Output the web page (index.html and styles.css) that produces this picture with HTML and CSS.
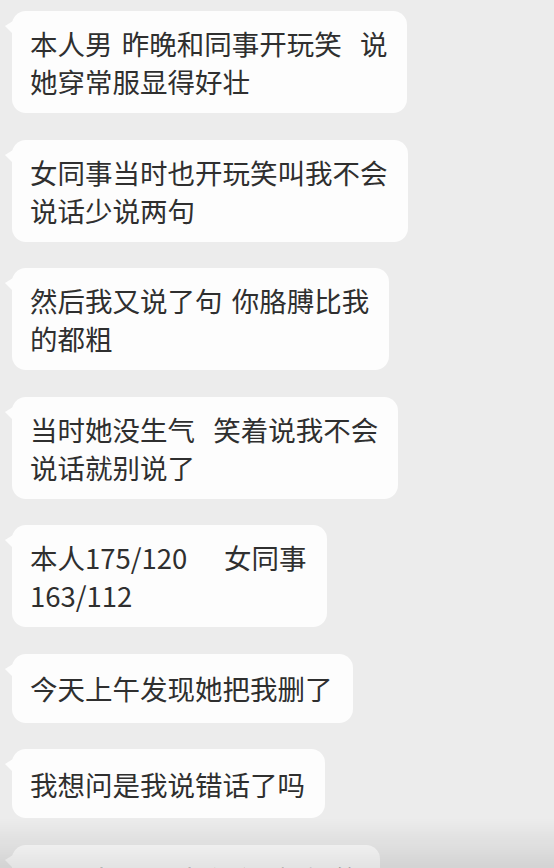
FILE: index.html
```html
<!DOCTYPE html>
<html lang="zh-CN">
<head>
    <meta charset="UTF-8">
    <meta name="viewport" content="width=device-width, initial-scale=1.0">
    <title>聊天记录</title>
    <link rel="stylesheet" href="styles.css">
</head>
<body>
    <div class="chat">
        <div class="bubble"><p>本人男 昨晚和同事开玩笑  说<br>她穿常服显得好壮</p></div>
        <div class="bubble"><p>女同事当时也开玩笑叫我不会<br>说话少说两句</p></div>
        <div class="bubble"><p>然后我又说了句 你胳膊比我<br>的都粗</p></div>
        <div class="bubble"><p>当时她没生气  笑着说我不会<br>说话就别说了</p></div>
        <div class="bubble"><p>本人175/120    女同事<br>163/112</p></div>
        <div class="bubble"><p>今天上午发现她把我删了</p></div>
        <div class="bubble"><p>我想问是我说错话了吗</p></div>
        <div class="bubble"><p>而且我俩平时关系还挺好的</p></div>
    </div>
    <div class="fade"></div>
</body>
</html>
```

FILE: styles.css
```css
html, body {
    height: 100%;
}
body {
    margin: 0;
    background-color: #ececec;
    font-family: "Noto Sans CJK SC", "Noto Sans", sans-serif;
    color: #2f2f2f;
    overflow: hidden;
}
.chat {
    display: flex;
    flex-direction: column;
    align-items: flex-start;
    gap: 26.5px;
    padding: 11px 0 0 12px;
}
.bubble {
    position: relative;
    display: flex;
    align-items: center;
    box-sizing: border-box;
    min-height: 69px;
    padding: 13px 20px 13px 18px;
    background: #fdfdfd;
    border-radius: 14px;
}
/* little tail on the left */
.bubble::before {
    content: "";
    position: absolute;
    left: -7px;
    top: 10px;
    border-right: 8px solid #fdfdfd;
    border-top: 5px solid transparent;
    border-bottom: 8px solid transparent;
}
.bubble p {
    margin: 0;
    font-size: 27.5px;
    line-height: 38px;
    word-spacing: 3px;
    white-space: pre;
}
.fade {
    position: fixed;
    left: 0;
    right: 0;
    bottom: 0;
    height: 50px;
    background: linear-gradient(to bottom, rgba(0,0,0,0), rgba(0,0,0,0.1));
    pointer-events: none;
}
```
